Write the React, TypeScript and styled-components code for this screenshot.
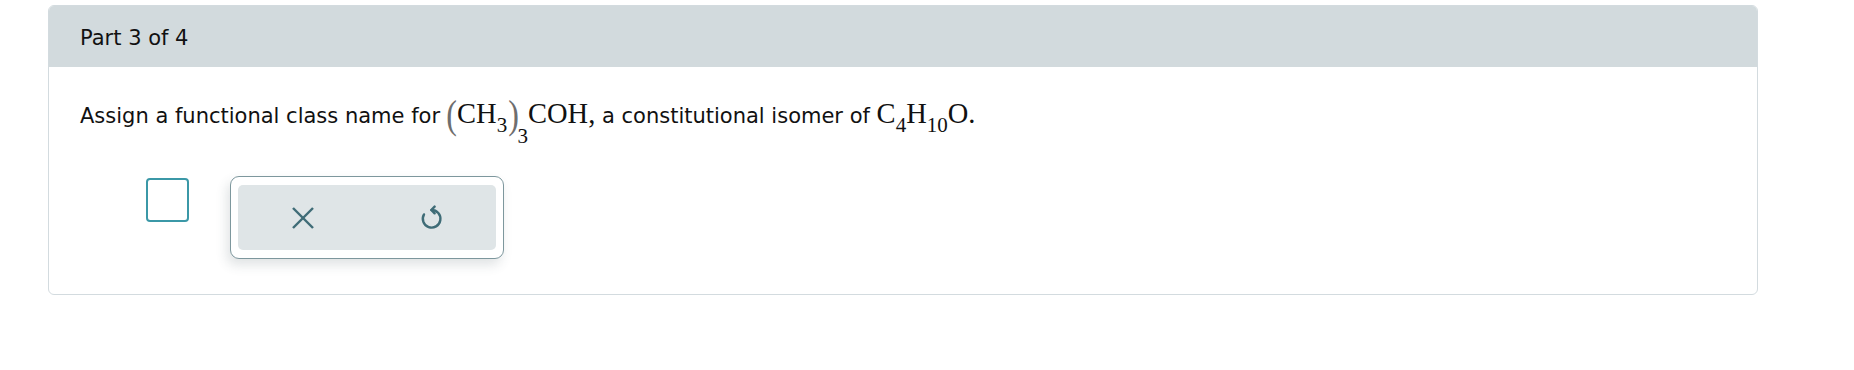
import React from "react";
import styled, { createGlobalStyle } from "styled-components";

const Global = createGlobalStyle`
  html, body {
    margin: 0;
    padding: 0;
    background: #ffffff;
  }
  body {
    font-family: "DejaVu Sans", Verdana, sans-serif;
    color: #111111;
  }
`;

const Page = styled.div`
  padding: 5px 0 0 48px;
`;

const Panel = styled.section`
  box-sizing: border-box;
  width: 1710px;
  border: 1px solid #d3dbdf;
  border-radius: 6px;
  overflow: hidden;
  background: #ffffff;
`;

const Header = styled.header`
  box-sizing: border-box;
  height: 61px;
  padding: 2px 0 0 31px;
  display: flex;
  align-items: center;
  background: #d2dadd;
  font-size: 21px;
  color: #111111;
`;

const Body = styled.div`
  padding: 29px 31px 35px;
`;

const Question = styled.div`
  font-size: 21px;
  line-height: 40px;
  height: 40px;
  white-space: nowrap;
`;

const Formula = styled.span`
  font-family: "Liberation Serif", "Times New Roman", serif;
  font-size: 28.5px;
  line-height: 0;
  color: #111111;
`;

const Paren = styled.span<{ $side: "l" | "r" }>`
  display: inline-block;
  font-size: 40px;
  line-height: 0;
  color: #6e6e6e;
  vertical-align: -5px;
  transform: scaleX(0.8);
  margin: ${(p) => (p.$side === "l" ? "0 -1px 0 -2px" : "0 -3px 0 0")};
`;

const Sub = styled.span<{ $drop?: number }>`
  font-size: 21px;
  line-height: 0;
  vertical-align: ${(p) => `-${p.$drop ?? 9}px`};
`;

const AnswerRow = styled.div`
  margin-top: 40px;
  padding-left: 66px;
  display: flex;
  align-items: flex-start;
  gap: 41px;
`;

const CheckBox = styled.div`
  box-sizing: border-box;
  width: 43px;
  height: 44px;
  margin-top: 2px;
  border: 2px solid #3b98a7;
  border-radius: 4px;
  background: #ffffff;
`;

const Popup = styled.div`
  box-sizing: border-box;
  width: 274px;
  height: 83px;
  padding: 8px 7px;
  border: 1px solid #7d979d;
  border-radius: 9px;
  background: #ffffff;
  box-shadow: -3px 6px 12px rgba(60, 80, 90, 0.16);
`;

const ToolTray = styled.div`
  height: 100%;
  border-radius: 5px;
  background: #dfe5e7;
  display: flex;
  align-items: center;
  justify-content: space-around;
`;

const ToolButton = styled.button`
  width: 40px;
  height: 40px;
  padding: 0;
  border: none;
  background: transparent;
  display: flex;
  align-items: center;
  justify-content: center;
  color: #3f6c77;
  cursor: pointer;
`;

const CloseIcon = () => (
  <svg width="24" height="24" viewBox="0 0 24 24" fill="none" stroke="currentColor" strokeWidth="2.4" strokeLinecap="butt">
    <path d="M2 2 L22 22" />
    <path d="M22 2 L2 22" />
  </svg>
);

const UndoIcon = () => (
  <svg width="26" height="26" viewBox="0 0 26 26" fill="none" stroke="currentColor" strokeWidth="2.4" strokeLinecap="round" strokeLinejoin="round">
    <path d="M12.5 5 A8.8 8.8 0 1 1 5 9.4" />
    <path d="M15.6 1.6 L12.3 5 L15.6 8.3" />
  </svg>
);

export default function App() {
  return (
    <>
      <Global />
      <Page>
        <Panel>
          <Header>Part 3 of 4</Header>
          <Body>
            <Question>
              Assign a functional class name for{" "}
              <Formula>
                <Paren $side="l">(</Paren>CH<Sub>3</Sub>
                <Paren $side="r">)</Paren>
                <Sub $drop={20}>3</Sub>COH,
              </Formula>{" "}
              a constitutional isomer of{" "}
              <Formula>
                C<Sub>4</Sub>H<Sub>10</Sub>O.
              </Formula>
            </Question>
            <AnswerRow>
              <CheckBox />
              <Popup>
                <ToolTray>
                  <ToolButton aria-label="Clear">
                    <CloseIcon />
                  </ToolButton>
                  <ToolButton aria-label="Undo">
                    <UndoIcon />
                  </ToolButton>
                </ToolTray>
              </Popup>
            </AnswerRow>
          </Body>
        </Panel>
      </Page>
    </>
  );
}
